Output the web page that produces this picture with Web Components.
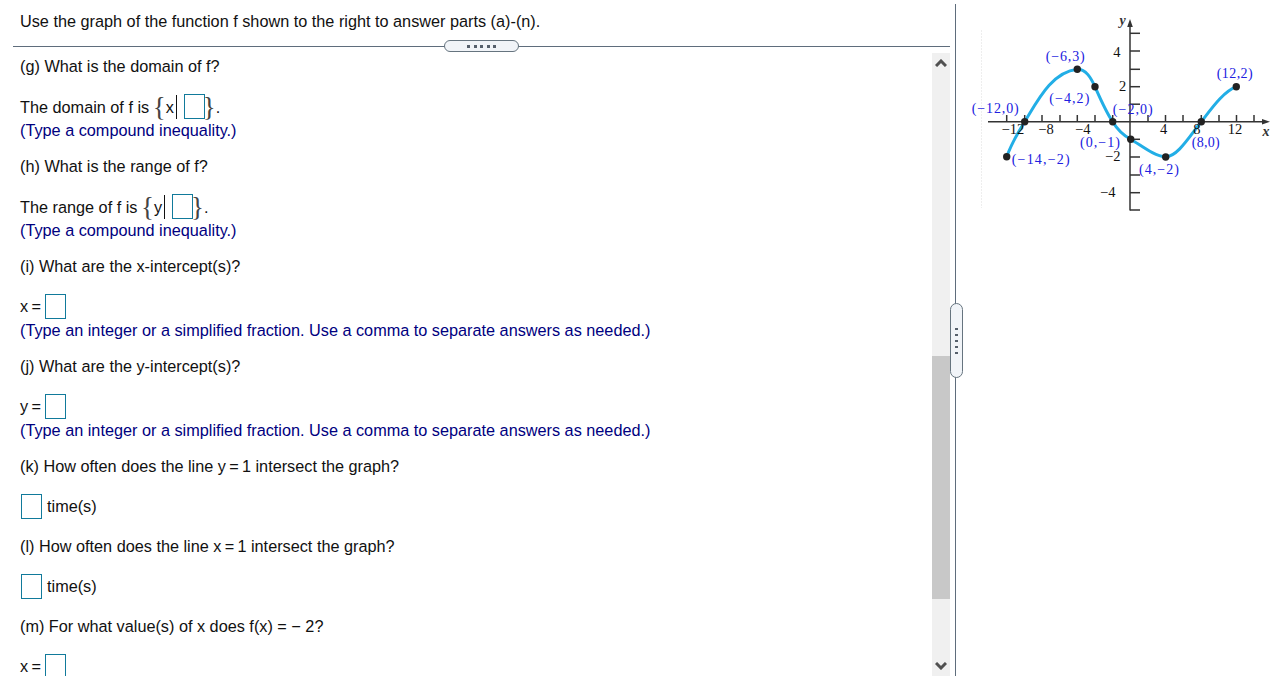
<!DOCTYPE html>
<html>
<head>
<meta charset="utf-8">
<title>Graph question</title>
<style>
  html, body { margin: 0; height: 100%; background: #fff; overflow: hidden; }
  body { font: 16.25px/20px "Liberation Sans", Arial, sans-serif; color: #111; }
  .up { margin-top: -2px; }
</style>
</head>
<body>
<quiz-page>
  <quiz-pane>
    <span slot="title">Use the graph of the function f shown to the right to answer parts (a)-(n).</span>

    <quiz-question gap="3">(g) What is the domain of f?</quiz-question>
    <quiz-answer>The domain of f is <set-brace var="x"></set-brace>.</quiz-answer>
    <quiz-hint>(Type a compound inequality.)</quiz-hint>

    <quiz-question>(h) What is the range of f?</quiz-question>
    <quiz-answer>The range of f is <set-brace var="y"></set-brace>.</quiz-answer>
    <quiz-hint>(Type a compound inequality.)</quiz-hint>

    <quiz-question>(i) What are the x-intercept(s)?</quiz-question>
    <quiz-answer><span class="up">x&thinsp;=&thinsp;</span><answer-box style="margin-left:1px"></answer-box></quiz-answer>
    <quiz-hint>(Type an integer or a simplified fraction. Use a comma to separate answers as needed.)</quiz-hint>

    <quiz-question>(j) What are the y-intercept(s)?</quiz-question>
    <quiz-answer><span class="up">y&thinsp;=&thinsp;</span><answer-box style="margin-left:1px"></answer-box></quiz-answer>
    <quiz-hint>(Type an integer or a simplified fraction. Use a comma to separate answers as needed.)</quiz-hint>

    <quiz-question>(k) How often does the line y&thinsp;=&thinsp;1 intersect the graph?</quiz-question>
    <quiz-answer><answer-box style="margin-left:1px"></answer-box><span class="up" style="margin-left:5px">time(s)</span></quiz-answer>

    <quiz-question>(l) How often does the line x&thinsp;=&thinsp;1 intersect the graph?</quiz-question>
    <quiz-answer><answer-box style="margin-left:1px"></answer-box><span class="up" style="margin-left:5px">time(s)</span></quiz-answer>

    <quiz-question>(m) For what value(s) of x does f(x) = − 2?</quiz-question>
    <quiz-answer><span class="up">x&thinsp;=&thinsp;</span><answer-box style="margin-left:1px"></answer-box></quiz-answer>
  </quiz-pane>
  <function-graph></function-graph>
</quiz-page>

<script>
class QuizPage extends HTMLElement {
  connectedCallback() {
    this.attachShadow({ mode: 'open' });
    this.shadowRoot.innerHTML = `
      <style>
        :host { display: flex; height: 672px; padding-top: 4px; }
        .split { position: relative; width: 1px; background: #5f6d7c; flex: none; }
        .grip {
          position: absolute; left: -5px; top: 299px; width: 11px; height: 73px;
          border: 1.5px solid #66747f; border-radius: 7px; background: #f1f4f8;
          display: flex; flex-direction: column; align-items: center; justify-content: center; gap: 4px;
        }
        .grip i { width: 3px; height: 2px; background: #56606c; }
      </style>
      <slot></slot>
      <div class="split"><div class="grip"><i></i><i></i><i></i><i></i><i></i></div></div>
      <slot name="graph"></slot>`;
    this.querySelector('function-graph').slot = 'graph';
  }
}

class QuizPane extends HTMLElement {
  connectedCallback() {
    this.attachShadow({ mode: 'open' });
    this.shadowRoot.innerHTML = `
      <style>
        :host { display: flex; flex-direction: column; width: 955px; height: 672px; flex: none; }
        header { height: 42px; box-sizing: border-box; margin-left: 20px; padding-top: 7px; }
        .rule { position: relative; height: 1px; margin: 0 5px 0 13px; background: #5f6d7c; flex: none; }
        .grip {
          position: absolute; left: 431px; top: -6px; width: 73px; height: 10px;
          border: 1.5px solid #66747f; border-radius: 7px; background: #f1f4f8;
          display: flex; align-items: center; justify-content: center; gap: 3.5px;
        }
        .grip i { width: 3px; height: 3px; background: #56606c; }
        .body { display: flex; flex: 1; min-height: 0; margin-top: 6px; padding-right: 5px; }
        .scroll { flex: 1; overflow: hidden; padding-left: 20px; }
      </style>
      <header><slot name="title"></slot></header>
      <div class="rule"><div class="grip"><i></i><i></i><i></i><i></i><i></i></div></div>
      <div class="body">
        <div class="scroll"><slot></slot></div>
        <scroll-rail></scroll-rail>
      </div>`;
  }
}

class ScrollRail extends HTMLElement {
  connectedCallback() {
    this.attachShadow({ mode: 'open' });
    this.shadowRoot.innerHTML = `
      <style>
        :host { display: flex; flex-direction: column; width: 18px; flex: none; background: #f0f0f0; }
        .btn { height: 20px; display: flex; align-items: center; justify-content: center; flex: none; }
        .track { flex: 1; display: flex; flex-direction: column; }
        .before { height: 283px; flex: none; }
        .thumb { height: 243px; background: #c8c8c8; flex: none; }
        svg { display: block; }
      </style>
      <div class="btn"><svg width="12" height="8" viewBox="0 0 12 8"><path d="M1 7L6 2l5 5" fill="none" stroke="#505050" stroke-width="3"/></svg></div>
      <div class="track"><div class="before"></div><div class="thumb"></div></div>
      <div class="btn"><svg width="12" height="8" viewBox="0 0 12 8"><path d="M1 1l5 5 5-5" fill="none" stroke="#505050" stroke-width="3"/></svg></div>`;
  }
}

class QuizQuestion extends HTMLElement {
  connectedCallback() {
    const gap = this.getAttribute('gap') ?? '16';
    this.attachShadow({ mode: 'open' });
    this.shadowRoot.innerHTML = `
      <style>:host { display: block; line-height: 20px; margin-top: ${gap}px; }</style>
      <slot></slot>`;
  }
}

class QuizAnswer extends HTMLElement {
  connectedCallback() {
    this.attachShadow({ mode: 'open' });
    this.shadowRoot.innerHTML = `
      <style>:host { display: flex; align-items: center; height: 26px; margin-top: 18px; white-space: pre; }</style>
      <slot></slot>`;
  }
}

class QuizHint extends HTMLElement {
  connectedCallback() {
    this.attachShadow({ mode: 'open' });
    this.shadowRoot.innerHTML = `
      <style>:host { display: block; line-height: 20px; color: #000080; }</style>
      <slot></slot>`;
  }
}

class AnswerBox extends HTMLElement {
  connectedCallback() {
    this.attachShadow({ mode: 'open' });
    this.shadowRoot.innerHTML = `
      <style>
        :host {
          display: inline-block; box-sizing: border-box; width: 21px; height: 25px; flex: none;
          align-self: flex-start; border: 1px solid #117a9b; background: #fff;
        }
      </style>`;
  }
}

class SetBrace extends HTMLElement {
  connectedCallback() {
    const name = this.getAttribute('var');
    this.attachShadow({ mode: 'open' });
    this.shadowRoot.innerHTML = `
      <style>
        :host { display: inline-flex; align-items: center; height: 26px; margin-left: -1px; }
        .b { font: 27px/24px "Liberation Serif", serif; color: #444; }
        .bar { width: 1px; height: 24px; background: #111; margin: 0 7px 1px 2px; }
        answer-box { margin-bottom: 1px; align-self: center; }
      </style>
      <span class="b">{</span><span>${name}</span><span class="bar"></span><answer-box></answer-box><span class="b" style="margin-left:-2px">}</span>`;
  }
}

class FunctionGraph extends HTMLElement {
  connectedCallback() {
    this.attachShadow({ mode: 'open' });
    const dots = [[46.7, 146.7], [64.7, 111.7], [117.3, 59.3], [135, 76.7], [152.7, 111.7], [170.7, 129.3], [205.7, 147], [241.3, 111.7], [276.3, 76.7]];
    const xTicks = [46.7, 64.7, 82, 100, 117.3, 135, 152.7, 188, 205.5, 223, 241.3, 259, 276.5, 294];
    const yTicks = [23.3, 41, 59.3, 76.7, 94.2, 129.3, 147, 165, 182.7, 200];
    // text, left, baseline, width
    const labels = [
      ['(−6,3)', 85.7, 50.7, 39], ['(12,2)', 256.7, 68, 36], ['(−4,2)', 89.3, 92.7, 40],
      ['(−12,0)', 11.7, 103.3, 47], ['(−2,0)', 152.7, 104.3, 40], ['(0,−1)', 120, 136.7, 40],
      ['(8,0)', 231.7, 137.3, 28], ['(−14,−2)', 51.7, 154, 58], ['(4,−2)', 179, 164, 40],
    ];
    const nums = [
      ['4', 153.3, 46.7], ['2', 159, 80.7], ['−2', 145, 151], ['−4', 140, 186.7],
      ['−12', 41.5, 124], ['−8', 78.3, 124], ['−4', 115, 124], ['4', 200, 124], ['8', 233.3, 124], ['12', 267.7, 124],
    ];
    const line = (x1, y1, x2, y2) => `<line x1="${x1}" y1="${y1}" x2="${x2}" y2="${y2}"/>`;
    this.shadowRoot.innerHTML = `
      <style>
        :host { display: block; margin-left: 4px; padding-top: 6px; flex: none; }
        svg { display: block; }
        text { font-family: "Liberation Serif", "Times New Roman", serif; font-size: 14px; }
        .lab { fill: #2020e0; }
        .num { fill: #111; font-size: 14.5px; }
        .ax { font-style: italic; font-weight: bold; fill: #333; }
      </style>
      <svg width="320" height="210" viewBox="0 0 320 210">
        <line x1="21.5" y1="20" x2="21.5" y2="198" stroke="#eeeeee" stroke-dasharray="2 1"/>
        <g stroke="#333" stroke-width="1.5">
          ${line(28, 111.7, 305, 111.7)}
          ${line(170, 14, 170, 200.5)}
          ${xTicks.map((x) => line(x, 105, x, 111.7)).join('')}
          ${yTicks.map((y) => line(170, y, 180, y)).join('')}
        </g>
        <path d="M310 111.7l-8-2.8v5.6zM170 9l-2.8 8h5.6z" fill="#333"/>
        <path d="M46.7 146.7C51 135 57 124 64.7 111.7C78 90 92 62 117.3 59.3C126 59 131 68 135 76.7C140 88 146 102 152.7 111.7C157 119 163 125 170.7 129.3C182 136 194 146 205.7 147C218 146 229 127 241.3 111.7C252 98 263 82 276.3 76.7"
          fill="none" stroke="#22aee6" stroke-width="3"/>
        <g fill="#222">${dots.map(([x, y]) => `<circle cx="${x}" cy="${y}" r="3.7"/>`).join('')}</g>
        ${labels.map(([t, x, y, w]) => `<text class="lab" x="${x}" y="${y}" textLength="${w}">${t}</text>`).join('')}
        ${nums.map(([t, x, y]) => `<text class="num" x="${x}" y="${y}">${t}</text>`).join('')}
        <text class="ax" x="302.5" y="125.5">x</text>
        <text class="ax" x="159.5" y="15">y</text>
      </svg>`;
  }
}

customElements.define('answer-box', AnswerBox);
customElements.define('set-brace', SetBrace);
customElements.define('quiz-question', QuizQuestion);
customElements.define('quiz-answer', QuizAnswer);
customElements.define('quiz-hint', QuizHint);
customElements.define('scroll-rail', ScrollRail);
customElements.define('quiz-pane', QuizPane);
customElements.define('function-graph', FunctionGraph);
customElements.define('quiz-page', QuizPage);
</script>
</body>
</html>
